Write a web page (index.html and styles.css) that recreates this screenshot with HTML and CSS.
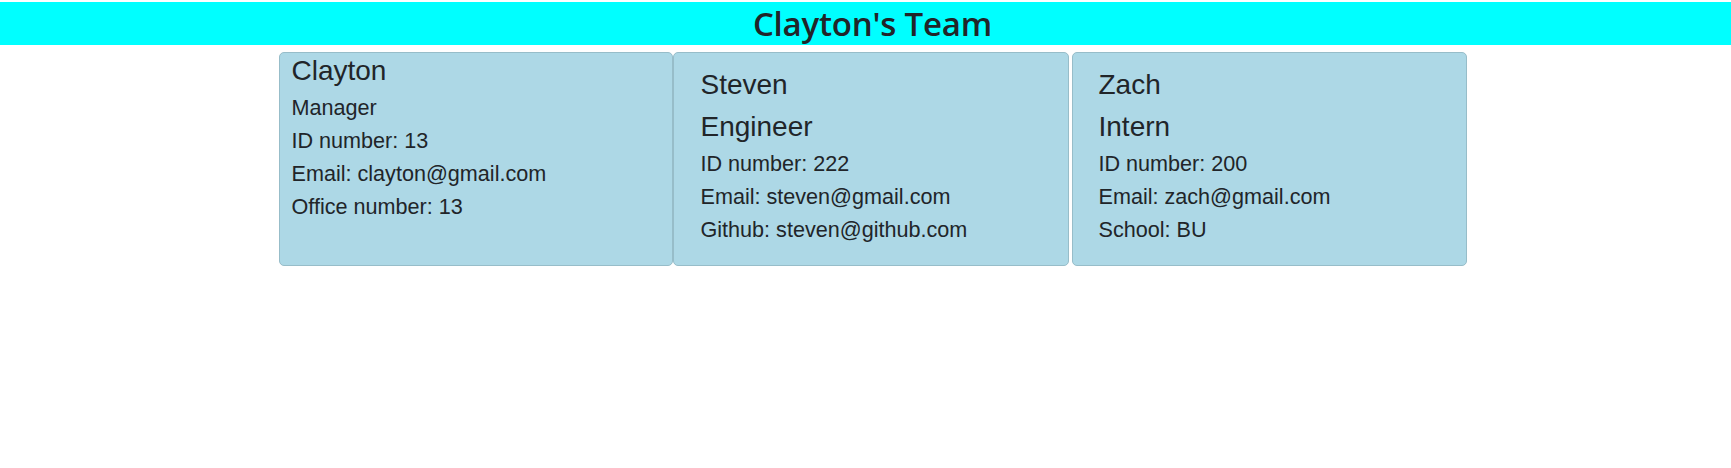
FILE: index.html
```html
<!DOCTYPE html>
<html lang="en">
<head>
<meta charset="utf-8">
<title>Clayton's Team</title>
<link rel="stylesheet" href="styles.css">
</head>
<body>
  <header class="banner">
    <h1 class="banner-title">Clayton's Team</h1>
  </header>
  <main class="team">
    <section class="card card-manager">
      <h3 class="card-name">Clayton</h3>
      <p class="card-role">Manager</p>
      <p class="card-line">ID number: 13</p>
      <p class="card-line">Email: clayton@gmail.com</p>
      <p class="card-line">Office number: 13</p>
    </section>
    <section class="card card-engineer">
      <h3 class="card-name">Steven</h3>
      <h3 class="card-title">Engineer</h3>
      <p class="card-line first">ID number: 222</p>
      <p class="card-line">Email: steven@gmail.com</p>
      <p class="card-line">Github: steven@github.com</p>
    </section>
    <section class="card card-intern">
      <h3 class="card-name">Zach</h3>
      <h3 class="card-title">Intern</h3>
      <p class="card-line first">ID number: 200</p>
      <p class="card-line">Email: zach@gmail.com</p>
      <p class="card-line">School: BU</p>
    </section>
  </main>
</body>
</html>
```

FILE: styles.css
```css
html, body {
  margin: 0;
  padding: 0;
  background: #ffffff;
}

body {
  padding-top: 2px;
  font-family: "Liberation Sans", Arial, sans-serif;
  color: #212529;
}

.banner {
  background: #00ffff;
  height: 43px;
  padding-left: 14px;
  display: flex;
  justify-content: center;
  align-items: flex-start;
}

.banner-title {
  margin: 0;
  padding-top: 1px;
  font-family: "Open Sans", "Noto Sans", sans-serif;
  font-weight: 600;
  font-size: 33px;
  line-height: 42px;
  color: #212529;
  letter-spacing: -0.2px;
}

.team {
  display: flex;
  justify-content: center;
  align-items: stretch;
  padding-left: 14px;
  margin-top: 7px;
}

.card {
  background: #add8e6;
  border: 1px solid #97bdc9;
  border-radius: 5px;
  box-sizing: border-box;
}

.card-manager {
  width: 394px;
  padding: 1px 11px 0 12px;
}

.card-engineer {
  width: 396px;
  padding: 15px 26px 19px 27px;
}

.card-intern {
  width: 395px;
  margin-left: 3px;
  padding: 15px 26px 19px 26px;
}

.card-name,
.card-title {
  margin: 0;
  font-size: 28px;
  line-height: 34px;
  font-weight: 400;
}

.card-title {
  margin-top: 8px;
}

.card-role {
  margin: 3px 0 0 0;
  font-size: 21.6px;
  line-height: 33px;
}

.card-line {
  margin: 0;
  font-size: 21.6px;
  line-height: 33px;
}

.card-line.first {
  margin-top: 3px;
}
```
